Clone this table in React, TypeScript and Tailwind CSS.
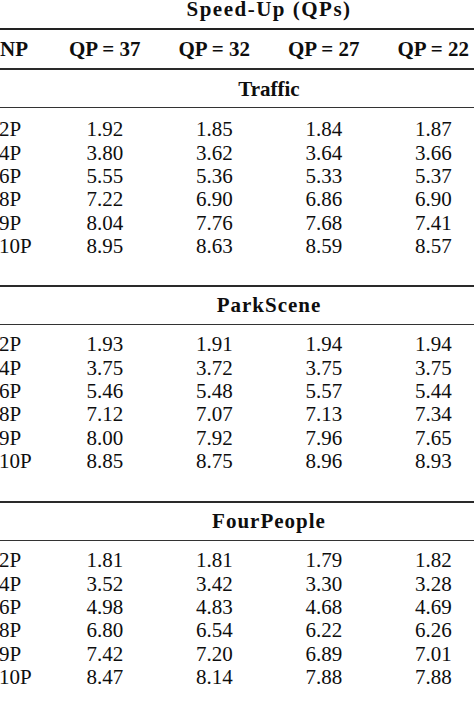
import React from 'react';

interface Group {
  name: string;
  spacing: string;
  pad: string;
  rows: string[][];
}

const groups: Group[] = [
  {
    name: 'Traffic',
    spacing: '',
    pad: 'pt-[10.3px] pb-[26.3px]',
    rows: [
      ['2P', '1.92', '1.85', '1.84', '1.87'],
      ['4P', '3.80', '3.62', '3.64', '3.66'],
      ['6P', '5.55', '5.36', '5.33', '5.37'],
      ['8P', '7.22', '6.90', '6.86', '6.90'],
      ['9P', '8.04', '7.76', '7.68', '7.41'],
      ['10P', '8.95', '8.63', '8.59', '8.57'],
    ],
  },
  {
    name: 'ParkScene',
    spacing: 'tracking-[1px]',
    pad: 'pt-[8.3px] pb-[27.3px]',
    rows: [
      ['2P', '1.93', '1.91', '1.94', '1.94'],
      ['4P', '3.75', '3.72', '3.75', '3.75'],
      ['6P', '5.46', '5.48', '5.57', '5.44'],
      ['8P', '7.12', '7.07', '7.13', '7.34'],
      ['9P', '8.00', '7.92', '7.96', '7.65'],
      ['10P', '8.85', '8.75', '8.96', '8.93'],
    ],
  },
  {
    name: 'FourPeople',
    spacing: 'tracking-[1px]',
    pad: 'pt-[8.3px] pb-[27.3px]',
    rows: [
      ['2P', '1.81', '1.81', '1.79', '1.82'],
      ['4P', '3.52', '3.42', '3.30', '3.28'],
      ['6P', '4.98', '4.83', '4.68', '4.69'],
      ['8P', '6.80', '6.54', '6.22', '6.26'],
      ['9P', '7.42', '7.20', '6.89', '7.01'],
      ['10P', '8.47', '8.14', '7.88', '7.88'],
    ],
  },
];

const qps = ['37', '32', '27', '22'];

const App: React.FC = () => {
  return (
    <div className="w-[474px] h-[712px] overflow-hidden bg-white text-[#0e0e0e] font-['Liberation_Serif',serif] text-[21px]">
      <div className="w-[488px]">
        <div className="grid grid-cols-[50px_1fr] h-[28px] leading-[18px]">
          <div />
          <div className="text-center font-bold tracking-[1.5px]">Speed-Up (QPs)</div>
        </div>
        <div className="h-[2px] bg-[#222]" />
        <div className="grid grid-cols-[50px_repeat(4,109.5px)] h-[38px] items-center leading-[24px] font-bold">
          <div>NP</div>
          {qps.map((qp) => (
            <div key={qp} className="text-center">
              QP = {qp}
            </div>
          ))}
        </div>

        {groups.map((group) => (
          <div key={group.name}>
            <div className="h-[2px] bg-[#2a2a2a]" />
            <div className="grid grid-cols-[50px_1fr] h-[37px] items-center leading-[24px] font-bold">
              <div />
              <div className={`text-center ${group.spacing}`}>{group.name}</div>
            </div>
            <div className="h-[1px] bg-[#333]" />
            <div className={group.pad}>
              {group.rows.map((row) => (
                <div
                  key={row[0]}
                  className="grid grid-cols-[50px_repeat(4,109.5px)] h-[23.4px] leading-[23.4px]"
                >
                  <div className="-ml-[1px]">{row[0]}</div>
                  {row.slice(1).map((v, i) => (
                    <div key={i} className="text-center">
                      {v}
                    </div>
                  ))}
                </div>
              ))}
            </div>
          </div>
        ))}
      </div>
    </div>
  );
};

export default App;
